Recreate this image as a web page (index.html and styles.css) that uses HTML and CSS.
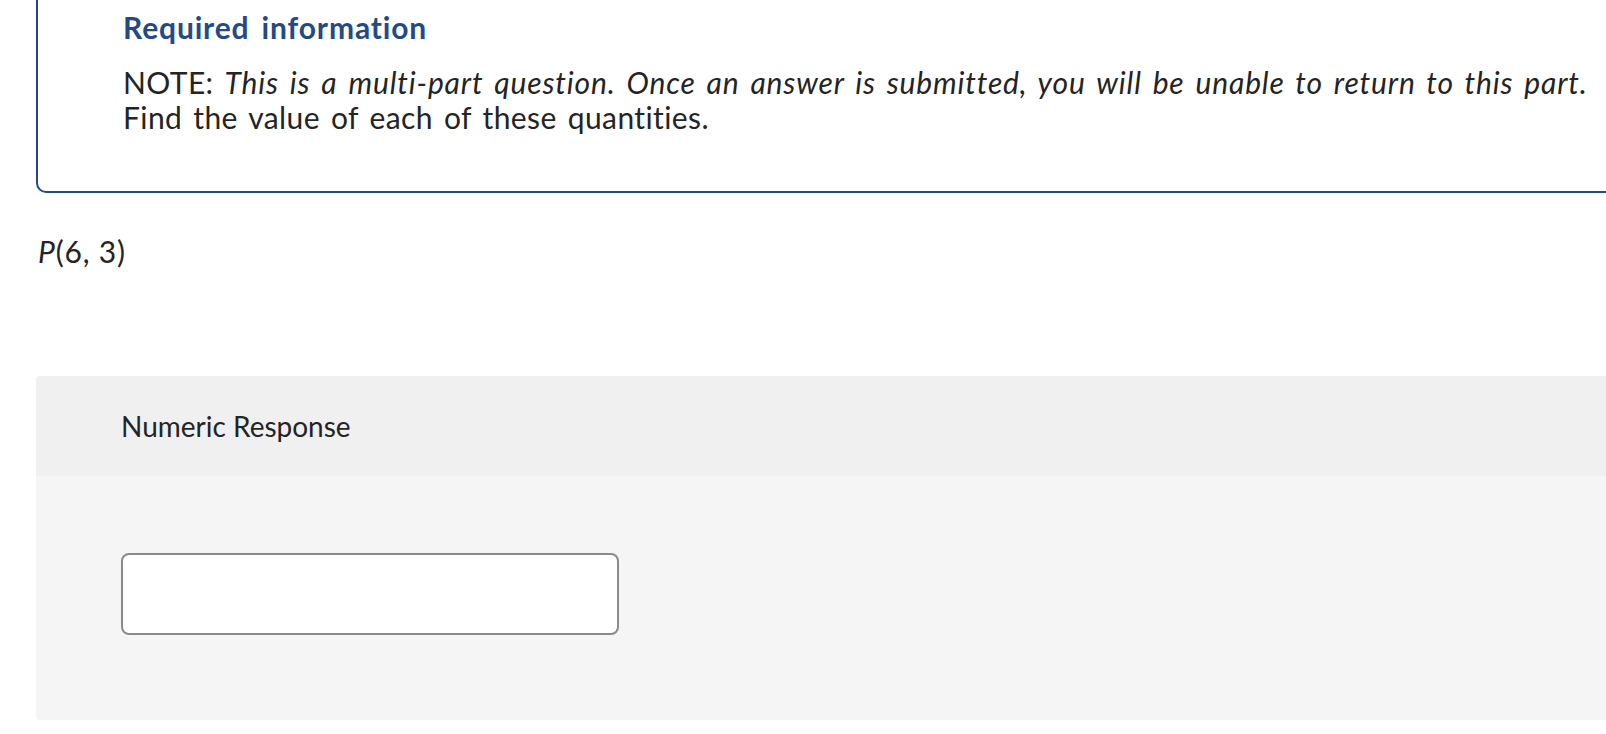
FILE: index.html
```html
<!DOCTYPE html>
<html lang="en">
<head>
<meta charset="utf-8">
<title>Required information</title>
<link rel="stylesheet" href="styles.css">
</head>
<body>
<div class="page">
  <section class="info-box">
    <h2 class="info-title">Required information</h2>
    <p class="info-note">NOTE: <em class="note-em">This is a multi-part question. Once an answer is submitted, you will be unable to return to this part.</em><br>Find the value of each of these quantities.</p>
  </section>
  <p class="question"><em>P</em>(6, 3)</p>
  <section class="response">
    <div class="response-head">Numeric Response</div>
    <div class="response-body">
      <input class="answer" type="text" aria-label="Numeric response">
    </div>
  </section>
</div>
</body>
</html>
```

FILE: styles.css
```css
html, body {
  margin: 0;
  padding: 0;
  background: #ffffff;
  overflow: hidden;
}
body {
  font-family: Lato, "Open Sans", sans-serif;
  color: #242424;
}
.page {
  padding-left: 36px;
  margin-right: -40px;
}
.info-box {
  border: 2px solid #234a86;
  border-top: 0;
  border-radius: 0 0 0 10px;
  padding: 9px 0 56px 85px;
}
.info-title {
  margin: 0;
  font-size: 30px;
  line-height: 36px;
  font-weight: 700;
  letter-spacing: 0.85px;
  word-spacing: 4px;
  color: #234a86;
}
.info-note {
  margin: 20px 0 0 0;
  font-size: 30px;
  line-height: 35px;
  letter-spacing: 0.4px;
  word-spacing: 3px;
}
.note-em {
  letter-spacing: 0.86px;
}
.question {
  margin: 41px 0 0 2px;
  font-size: 30px;
  line-height: 35px;
  letter-spacing: 0.8px;
}
.response {
  margin-top: 107px;
  border-radius: 4px 0 0 4px;
  overflow: hidden;
}
.response-head {
  background: #f0f0f0;
  height: 100px;
  box-sizing: border-box;
  padding: 33px 0 0 85px;
  font-size: 28px;
  line-height: 35px;
}
.response-body {
  background: #f5f5f5;
  height: 244px;
  box-sizing: border-box;
  padding: 77px 0 0 85px;
}
.answer {
  display: block;
  width: 498px;
  height: 82px;
  box-sizing: border-box;
  border: 2px solid #8a8a8a;
  border-radius: 8px;
  background: #ffffff;
  margin: 0;
  padding: 0 16px;
  font-size: 28px;
  font-family: inherit;
}
```
